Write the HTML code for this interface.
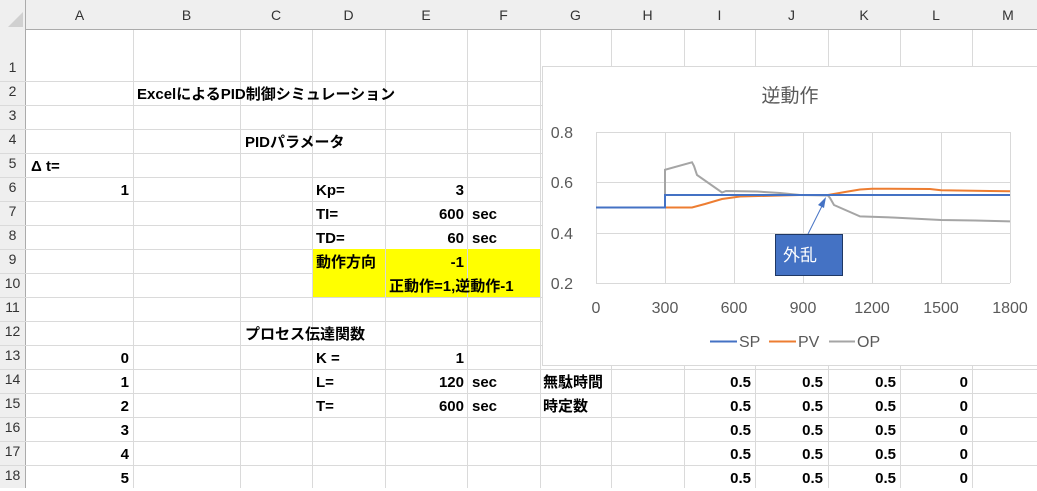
<!DOCTYPE html>
<html><head><meta charset="utf-8"><style>
*{margin:0;padding:0;box-sizing:border-box}
body{width:1037px;height:488px;overflow:hidden;background:#fff;position:relative;font-family:"Liberation Sans","Noto Sans CJK JP",sans-serif}
.v{position:absolute;top:30px;height:458px;width:1px;background:#dadada}
.h{position:absolute;left:0;width:1037px;height:1px;background:#dadada}
.hd{position:absolute;top:0;height:30px;line-height:30px;text-align:center;font-size:14px;color:#333}
.rn{position:absolute;left:0;width:25px;text-align:center;font-size:14px;color:#333}
.t{position:absolute;font-size:15px;font-weight:bold;color:#000;white-space:nowrap;line-height:24px;margin-top:2px}
.r{text-align:right}
</style></head><body>
<div style="position:absolute;left:0;top:0;width:1037px;height:30px;background:#efefef;border-bottom:1px solid #ababab"></div>
<div style="position:absolute;left:0;top:0;width:26px;height:488px;background:#efefef;border-right:1px solid #ababab"></div>
<svg style="position:absolute;left:8px;top:12px" width="16" height="16"><polygon points="15,0 15,15 0,15" fill="#d0d0d0"/></svg>
<div style="position:absolute;left:312px;top:249px;width:228px;height:48px;background:#ffff00"></div>
<div class="v" style="left:133px"></div><div class="v" style="left:240px"></div><div class="v" style="left:312px"></div><div class="v" style="left:385px"></div><div class="v" style="left:467px"></div><div class="v" style="left:540px"></div><div class="v" style="left:611px"></div><div class="v" style="left:684px"></div><div class="v" style="left:755px"></div><div class="v" style="left:828px"></div><div class="v" style="left:900px"></div><div class="v" style="left:972px"></div>
<div class="h" style="top:81px"></div><div class="h" style="top:105px"></div><div class="h" style="top:129px"></div><div class="h" style="top:153px"></div><div class="h" style="top:177px"></div><div class="h" style="top:201px"></div><div class="h" style="top:225px"></div><div class="h" style="top:249px;width:312px"></div><div class="h" style="top:273px;width:312px"></div><div class="h" style="top:297px"></div><div class="h" style="top:321px"></div><div class="h" style="top:345px"></div><div class="h" style="top:369px"></div><div class="h" style="top:393px"></div><div class="h" style="top:417px"></div><div class="h" style="top:441px"></div><div class="h" style="top:465px"></div>
<div class="hd" style="left:26px;width:107px">A</div><div class="hd" style="left:133px;width:107px">B</div><div class="hd" style="left:240px;width:72px">C</div><div class="hd" style="left:312px;width:73px">D</div><div class="hd" style="left:385px;width:82px">E</div><div class="hd" style="left:467px;width:73px">F</div><div class="hd" style="left:540px;width:71px">G</div><div class="hd" style="left:611px;width:73px">H</div><div class="hd" style="left:684px;width:71px">I</div><div class="hd" style="left:755px;width:73px">J</div><div class="hd" style="left:828px;width:72px">K</div><div class="hd" style="left:900px;width:72px">L</div><div class="hd" style="left:972px;width:72px">M</div>
<div class="rn" style="top:59px">1</div><div class="rn" style="top:83px">2</div><div class="rn" style="top:107px">3</div><div class="rn" style="top:131px">4</div><div class="rn" style="top:155px">5</div><div class="rn" style="top:179px">6</div><div class="rn" style="top:203px">7</div><div class="rn" style="top:227px">8</div><div class="rn" style="top:251px">9</div><div class="rn" style="top:275px">10</div><div class="rn" style="top:299px">11</div><div class="rn" style="top:323px">12</div><div class="rn" style="top:347px">13</div><div class="rn" style="top:371px">14</div><div class="rn" style="top:395px">15</div><div class="rn" style="top:419px">16</div><div class="rn" style="top:443px">17</div><div class="rn" style="top:467px">18</div>
<div class="t" style="left:137px;top:81px">ExcelによるPID制御シミュレーション</div>
<div class="t" style="left:245px;top:129px">PIDパラメータ</div>
<div class="t" style="left:31px;top:153px">Δ t=</div>
<div class="t r" style="left:30px;width:99px;top:177px">1</div>
<div class="t" style="left:316px;top:177px">Kp=</div><div class="t r" style="left:385px;width:79px;top:177px">3</div>
<div class="t" style="left:316px;top:201px">TI=</div><div class="t r" style="left:385px;width:79px;top:201px">600</div><div class="t" style="left:472px;top:201px">sec</div>
<div class="t" style="left:316px;top:225px">TD=</div><div class="t r" style="left:385px;width:79px;top:225px">60</div><div class="t" style="left:472px;top:225px">sec</div>
<div class="t" style="left:316px;top:249px">動作方向</div><div class="t r" style="left:385px;width:79px;top:249px">-1</div>
<div class="t" style="left:389px;top:273px">正動作=1,逆動作-1</div>
<div class="t" style="left:245px;top:321px">プロセス伝達関数</div>
<div class="t r" style="left:30px;width:99px;top:345px">0</div><div class="t" style="left:316px;top:345px">K =</div><div class="t r" style="left:385px;width:79px;top:345px">1</div>
<div class="t r" style="left:30px;width:99px;top:369px">1</div><div class="t" style="left:316px;top:369px">L=</div><div class="t r" style="left:385px;width:79px;top:369px">120</div><div class="t" style="left:472px;top:369px">sec</div><div class="t" style="left:543px;top:369px">無駄時間</div>
<div class="t r" style="left:30px;width:99px;top:393px">2</div><div class="t" style="left:316px;top:393px">T=</div><div class="t r" style="left:385px;width:79px;top:393px">600</div><div class="t" style="left:472px;top:393px">sec</div><div class="t" style="left:543px;top:393px">時定数</div>
<div class="t r" style="left:30px;width:99px;top:417px">3</div>
<div class="t r" style="left:30px;width:99px;top:441px">4</div>
<div class="t r" style="left:30px;width:99px;top:465px">5</div>
<div class="t r" style="left:684px;width:67px;top:369px">0.5</div><div class="t r" style="left:755px;width:68px;top:369px">0.5</div><div class="t r" style="left:828px;width:68px;top:369px">0.5</div><div class="t r" style="left:900px;width:68px;top:369px">0</div>
<div class="t r" style="left:684px;width:67px;top:393px">0.5</div><div class="t r" style="left:755px;width:68px;top:393px">0.5</div><div class="t r" style="left:828px;width:68px;top:393px">0.5</div><div class="t r" style="left:900px;width:68px;top:393px">0</div>
<div class="t r" style="left:684px;width:67px;top:417px">0.5</div><div class="t r" style="left:755px;width:68px;top:417px">0.5</div><div class="t r" style="left:828px;width:68px;top:417px">0.5</div><div class="t r" style="left:900px;width:68px;top:417px">0</div>
<div class="t r" style="left:684px;width:67px;top:441px">0.5</div><div class="t r" style="left:755px;width:68px;top:441px">0.5</div><div class="t r" style="left:828px;width:68px;top:441px">0.5</div><div class="t r" style="left:900px;width:68px;top:441px">0</div>
<div class="t r" style="left:684px;width:67px;top:465px">0.5</div><div class="t r" style="left:755px;width:68px;top:465px">0.5</div><div class="t r" style="left:828px;width:68px;top:465px">0.5</div><div class="t r" style="left:900px;width:68px;top:465px">0</div>
<svg style="position:absolute;left:0;top:0" width="1037" height="488" font-family="Liberation Sans, Noto Sans CJK JP, sans-serif">
<rect x="542.5" y="66.5" width="500" height="299" fill="#fff" stroke="#d9d9d9"/>
<text x="790" y="102" font-size="19" fill="#595959" text-anchor="middle">逆動作</text>
<g stroke="#d9d9d9" stroke-width="1">
<line x1="596" y1="132.5" x2="1010" y2="132.5"/><line x1="596" y1="182.5" x2="1010" y2="182.5"/><line x1="596" y1="233.5" x2="1010" y2="233.5"/><line x1="596" y1="283.5" x2="1010" y2="283.5"/>
<line x1="596.5" y1="132" x2="596.5" y2="283"/><line x1="665.5" y1="132" x2="665.5" y2="283"/><line x1="734.5" y1="132" x2="734.5" y2="283"/><line x1="803.5" y1="132" x2="803.5" y2="283"/><line x1="872.5" y1="132" x2="872.5" y2="283"/><line x1="941.5" y1="132" x2="941.5" y2="283"/><line x1="1010.5" y1="132" x2="1010.5" y2="283"/>
</g>
<g font-size="16" fill="#595959" text-anchor="end">
<text x="573" y="138">0.8</text><text x="573" y="188">0.6</text><text x="573" y="239">0.4</text><text x="573" y="289">0.2</text>
</g>
<g font-size="16" fill="#595959" text-anchor="middle">
<text x="596" y="313">0</text><text x="665" y="313">300</text><text x="734" y="313">600</text><text x="803" y="313">900</text><text x="872" y="313">1200</text><text x="941" y="313">1500</text><text x="1010" y="313">1800</text>
</g>
<polyline fill="none" stroke="#a5a5a5" stroke-width="2" points="596,207.5 665,207.5 665,169.8 692,162.3 694,166 697,175 722,192.5 726,191 757,191.5 780,193 800,195 828,195.5 830,198 834,205 860,216.4 895,217.6 941,220 975,220.5 1010,221.4"/>
<polyline fill="none" stroke="#ed7d31" stroke-width="2" points="596,207.5 692,207.5 705,204 722,199 740,196.5 780,195.5 800,195 828,195 845,192 860,189.5 872,188.7 930,189 941,190.3 990,191 1010,191.3"/>
<polyline fill="none" stroke="#4472c4" stroke-width="2" points="596,207.5 665,207.5 665,195 1010,195"/>
<line x1="808" y1="234" x2="823" y2="204" stroke="#4472c4" stroke-width="1"/>
<polygon points="826,197 818,205 824,208" fill="#4472c4"/>
<rect x="775.5" y="234.5" width="67" height="41" fill="#4472c4" stroke="#1f3864"/>
<text x="783" y="261" font-size="17" fill="#fff">外乱</text>
<g font-size="16" fill="#595959">
<line x1="710" y1="341.5" x2="737" y2="341.5" stroke="#4472c4" stroke-width="2"/><text x="739" y="347">SP</text>
<line x1="769" y1="341.5" x2="796" y2="341.5" stroke="#ed7d31" stroke-width="2"/><text x="798" y="347">PV</text>
<line x1="829" y1="341.5" x2="855" y2="341.5" stroke="#a5a5a5" stroke-width="2"/><text x="857" y="347">OP</text>
</g>
</svg>
</body></html>
